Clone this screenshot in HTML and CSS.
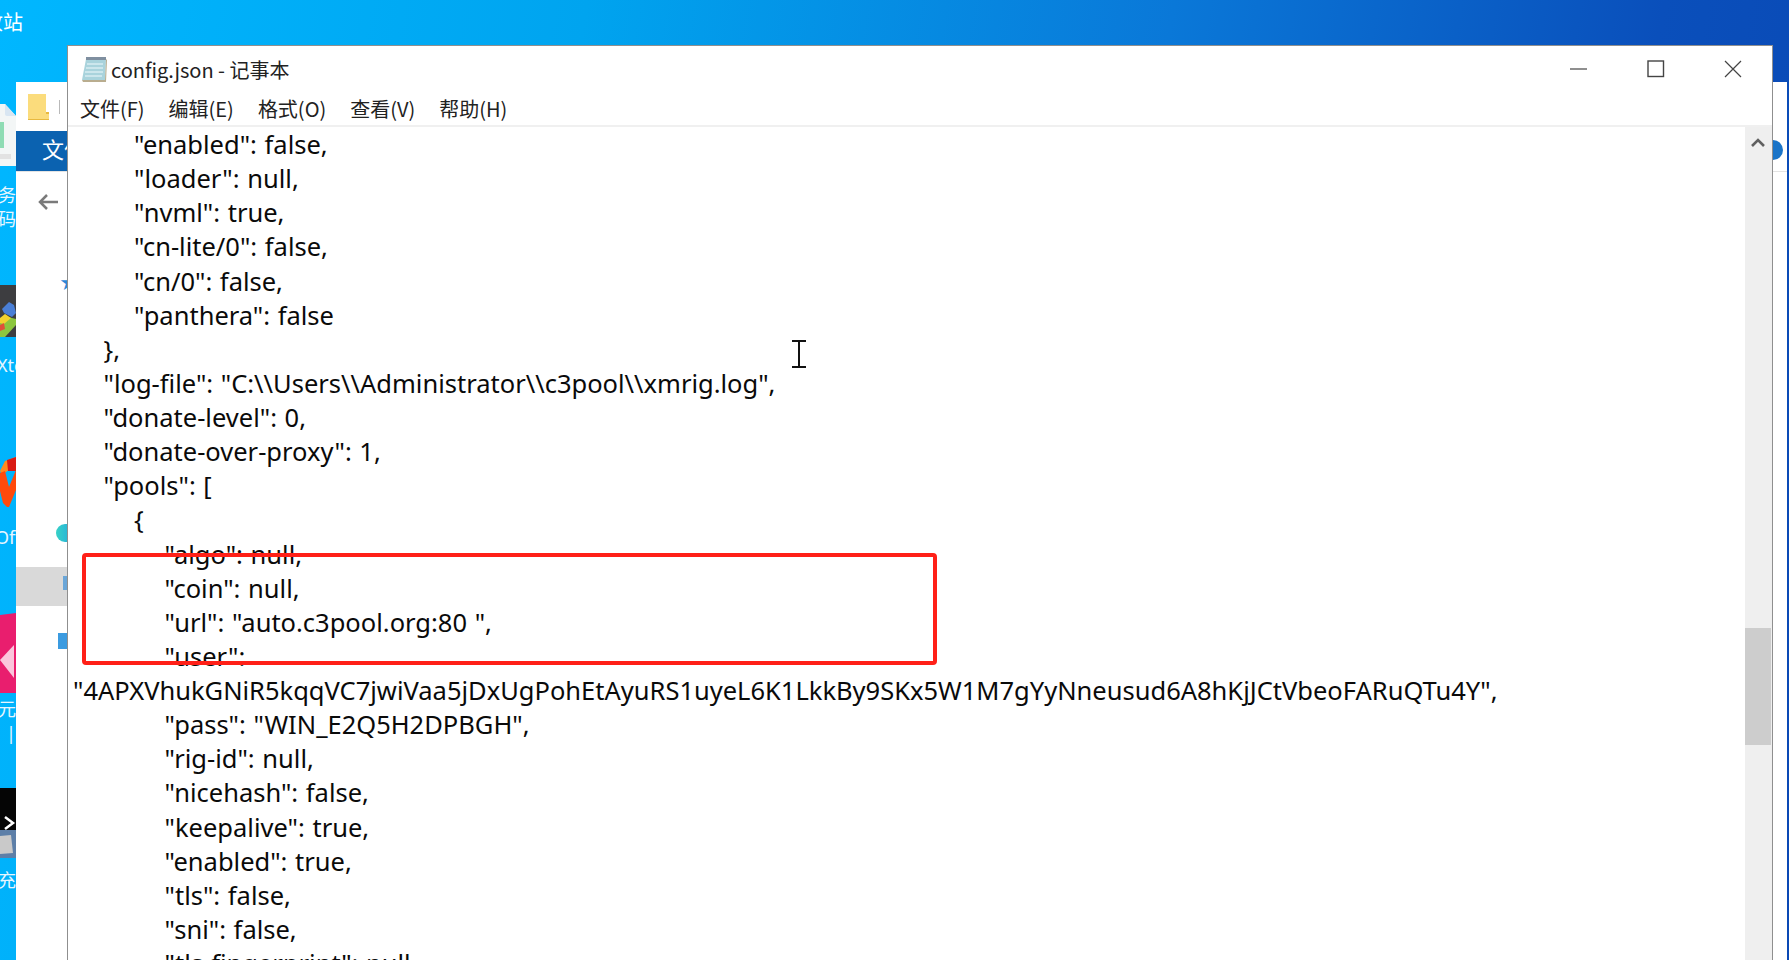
FILE: index.html
```html
<!DOCTYPE html>
<html lang="zh-CN">
<head>
<meta charset="utf-8">
<title>config.json - 记事本</title>
<link rel="stylesheet" href="styles.css">
</head>
<body>
<div class="desktop">
  <div class="desk-label label-site">回收站</div>
  <svg class="desk-icon icon-file" viewBox="0 0 16 62" width="16" height="62"><path d="M0 0 H5 L16 12 V62 H0Z" fill="#f3f6f6"/><path d="M5 0 L16 12 H7 Q5 12 5 10Z" fill="#d9e6f2"/><rect y="18" width="4" height="26" fill="#8fdcb4"/><rect y="50" width="11" height="5" fill="#e2e2e2"/></svg>
  <div class="desk-label label-a">服务<br>码.</div>
  <div class="desk-icon icon-cube">
    <svg viewBox="0 0 16 52" width="16" height="52"><rect width="16" height="52" fill="#3d3d40"/><path d="M0 36 L8 32 L16 34 V40 L5 52 H0Z" fill="#8cc63f"/><path d="M2 24 L9 17 L14 20 L16 28 L12 32 L4 28Z" fill="#4a7fd6"/><path d="M0 33 L5 29 L11 33 L4 39 L0 38Z" fill="#f2d22e"/><path d="M0 40 L4 38 L5 44 L0 46Z" fill="#e0503a"/></svg>
  </div>
  <div class="desk-label label-b">Xte</div>
  <div class="desk-icon icon-check">
    <svg viewBox="0 0 16 54" width="16" height="54"><path d="M0 14 L5 4 L16 0 V6 L10 12 L2 18Z" fill="#ff8a1f"/><path d="M7 3 L16 0 V14 H8Z" fill="#d91a14"/><path d="M0 16 L5 14 L9 30 L16 13 V33 L9 50 H7 L3 46 L0 34Z" fill="#ff4a0c"/></svg>
  </div>
  <div class="desk-label label-c">Off</div>
  <div class="desk-icon icon-pink">
    <svg viewBox="0 0 16 82" width="16" height="82"><path d="M0 3 L16 1 V81 H0Z" fill="#e91e6e"/><path d="M0 48 L14 33 V66Z" fill="#fbc6dc"/></svg>
  </div>
  <div class="desk-label label-d">元<br>|</div>
  <div class="desk-icon icon-black">
    <svg viewBox="0 0 16 70" width="16" height="70"><rect width="16" height="42" fill="#050505"/><rect y="42" width="16" height="28" fill="#5d7fa8"/><path d="M5 29 L13 35 L5 41" fill="none" stroke="#fff" stroke-width="2.5"/><path d="M0 48 L11 47 L13 65 L0 66Z" fill="#c9c9c9"/></svg>
  </div>
  <div class="desk-label label-e">充.</div>

  <div class="window explorer">
    <div class="ex-title">
      <svg class="ex-folder" viewBox="0 0 21 26" width="21" height="26"><path d="M0 0 H18 V18 H21 V26 H0Z" fill="#fbdc7c"/><path d="M0 25 H21 V26 H0Z M18 18 H21 V20 H18Z" fill="#e8b93f"/></svg>
      <span class="ex-sep"></span>
    </div>
    <div class="ex-ribbon"><span class="ex-tab">文件</span></div>
    <div class="ex-nav">
      <svg class="ex-back" viewBox="0 0 22 18" width="22" height="18"><path d="M10 2 L3 9 L10 16 M3 9 H21" fill="none" stroke="#7a7a7a" stroke-width="2.5"/></svg>
    </div>
    <div class="ex-side">
      <span class="ex-star">★</span>
      <span class="ex-cloud"></span>
      <span class="ex-selected"><span class="ex-pc"></span></span>
      <span class="ex-net"></span>
    </div>
    <span class="ex-help"></span>
  </div>

  <main class="window notepad">
    <header class="np-title">
      <svg class="np-icon" viewBox="0 0 26 26" width="26" height="26">
        <path d="M5 3 H25 L24 24 H1Z" fill="#a9d3dc"/>
        <path d="M1 24 H24 L25 3 L26 4 L25 26 H2Z" fill="#b9ad8f"/>
        <path d="M5 1 H25 V4 H5Z" fill="#7f8fa0"/>
        <path d="M6 8 H22 M5 12 H22 M4 16 H22 M4 20 H21" stroke="#d7edf1" stroke-width="1.5"/>
      </svg>
      <span class="np-name">config.json - 记事本</span>
      <div class="np-controls">
        <svg class="ctl" viewBox="0 0 18 18" width="18" height="18"><path d="M0 9 H17" stroke="#444" stroke-width="1.2"/></svg>
        <svg class="ctl" viewBox="0 0 18 18" width="18" height="18"><rect x="1" y="1" width="15.5" height="15.5" fill="none" stroke="#444" stroke-width="1.4"/></svg>
        <svg class="ctl" viewBox="0 0 18 18" width="18" height="18"><path d="M1 1 L17 17 M17 1 L1 17" stroke="#444" stroke-width="1.2"/></svg>
      </div>
    </header>
    <nav class="np-menu">
      <span>文件(F)</span><span>编辑(E)</span><span>格式(O)</span><span>查看(V)</span><span>帮助(H)</span>
    </nav>
    <div class="np-body">
      <pre class="np-text">        "enabled": false,
        "loader": null,
        "nvml": true,
        "cn-lite/0": false,
        "cn/0": false,
        "panthera": false
    },
    "log-file": "C:\\Users\\Administrator\\c3pool\\xmrig.log",
    "donate-level": 0,
    "donate-over-proxy": 1,
    "pools": [
        {
            "algo": null,
            "coin": null,
            "url": "auto.c3pool.org:80 ",
            "user":
"4APXVhukGNiR5kqqVC7jwiVaa5jDxUgPohEtAyuRS1uyeL6K1LkkBy9SKx5W1M7gYyNneusud6A8hKjJCtVbeoFARuQTu4Y",
            "pass": "WIN_E2Q5H2DPBGH",
            "rig-id": null,
            "nicehash": false,
            "keepalive": true,
            "enabled": true,
            "tls": false,
            "sni": false,
            "tls-fingerprint": null,</pre>
      <div class="np-scroll">
        <svg class="np-up" viewBox="0 0 14 10" width="14" height="10"><path d="M1 8 L7 2 L13 8" fill="none" stroke="#606060" stroke-width="2.6"/></svg>
        <div class="np-thumb"></div>
      </div>
    </div>
    <div class="highlight"></div>
    <svg class="ibeam" viewBox="0 0 16 28" width="16" height="28"><path d="M1 1 H15 M1 27 H15 M8 1 V27" stroke="#111" stroke-width="2" fill="none"/></svg>
  </main>
</div>
</body>
</html>
```
FILE: styles.css
```css
* { box-sizing: border-box; }
html, body { margin: 0; padding: 0; height: 100%; overflow: hidden; }
.desktop {
  position: relative;
  width: 1789px;
  height: 960px;
  overflow: hidden;
  font-family: "Noto Sans", "Noto Sans CJK SC", sans-serif;
  background: linear-gradient(100deg, #00b7ff 0%, #00a4ef 30%, #0a78d8 60%, #0a4fbb 85%, #0a48b4 100%);
}
.desk-label { position: absolute; left: 0; width: 16px; overflow: hidden; white-space: nowrap; color: #e8f6ff; font-size: 18px; line-height: 24px; direction: rtl; }
.label-site { top: 11px; width: 23px; color: #fff; font-size: 20px; }
.label-a { top: 183px; }
.label-b { top: 353px; direction: ltr; text-indent: -3px; }
.label-c { top: 525px; direction: ltr; text-indent: -5px; }
.label-d { top: 697px; }
.label-e { top: 868px; }
.desk-icon { position: absolute; left: 0; width: 16px; line-height: 0; display: block; }
.icon-file { top: 104px; }
.icon-cube { top: 285px; }
.icon-check { top: 457px; }
.icon-pink { top: 612px; }
.icon-black { top: 788px; }

.window { position: absolute; background: #fff; }
.explorer { left: 16px; top: 82px; width: 1771px; height: 878px; }
.ex-title { height: 49px; display: flex; align-items: center; padding-left: 12px; }
.ex-folder { display: block; }
.ex-sep { width: 1px; height: 14px; margin-left: 10px; background: #b9b9b9; }
.ex-ribbon { height: 41px; display: flex; border-bottom: 1px solid #e3e3e3; }
.ex-tab { width: 100px; background: #0b62b0; color: #fff; padding: 4px 0 0 26px; font-size: 22px; line-height: 28px; }
.ex-nav { height: 51px; padding: 21px 0 0 21px; }
.ex-back { display: block; }
.ex-side { position: relative; height: 600px; }
.ex-star { position: absolute; left: 44px; top: 50px; color: #2b88d8; font-size: 18px; line-height: 1; }
.ex-cloud { position: absolute; left: 40px; top: 301px; width: 24px; height: 18px; border-radius: 10px; background: linear-gradient(90deg, #37d1c6, #1a9de8); }
.ex-selected { position: absolute; left: 0; top: 344px; width: 51px; height: 39px; background: #d9d9d9; }
.ex-pc { position: absolute; left: 47px; top: 9px; width: 4px; height: 14px; background: #6aa6d8; }
.ex-net { position: absolute; left: 42px; top: 410px; width: 12px; height: 16px; background: #3b9be0; }
.ex-help { position: absolute; right: 4px; top: 58px; width: 20px; height: 20px; border-radius: 50%; background: #1a74c8; }

.notepad {
  left: 67px; top: 45px; width: 1706px; height: 915px;
  display: flex; flex-direction: column;
  border: 1px solid #8f8f8f; border-bottom: 0;
  color: #111;
}
.np-title { height: 46px; display: flex; align-items: center; padding-left: 13px; flex: none; }
.np-icon { display: block; flex: none; }
.np-name { margin-left: 4px; font-size: 20px; color: #222; white-space: nowrap; font-family: "Noto Sans CJK SC", sans-serif; }
.np-controls { margin-left: auto; display: flex; align-items: center; gap: 59px; padding-right: 30px; }
.ctl { display: block; }
.np-menu { height: 35px; flex: none; display: flex; gap: 24px; padding-left: 12px; font-family: "Noto Sans CJK SC", sans-serif; font-size: 20px; line-height: 34px; color: #222; white-space: nowrap; border-bottom: 2px solid #f0f0f0; }
.np-body { flex: 1; min-height: 0; display: flex; position: relative; }
.np-text { flex: 1; min-width: 0; margin: 0; padding: 0 0 0 5px; overflow: hidden; font-family: "Noto Sans", sans-serif; font-size: 25.5px; line-height: 34.13px; word-spacing: 1px; color: #0a0a0a; }
.np-scroll { width: 27px; flex: none; background: #efefef; position: relative; }
.np-up { position: absolute; left: 6px; top: 11px; display: block; }
.np-thumb { position: absolute; left: 0; top: 501px; width: 26px; height: 117px; background: #cdcdcd; }
.highlight { position: absolute; left: 14px; top: 507px; width: 855px; height: 112px; border: 4px solid #ff2018; border-radius: 4px; }
.ibeam { position: absolute; left: 723px; top: 294px; display: block; }
```
